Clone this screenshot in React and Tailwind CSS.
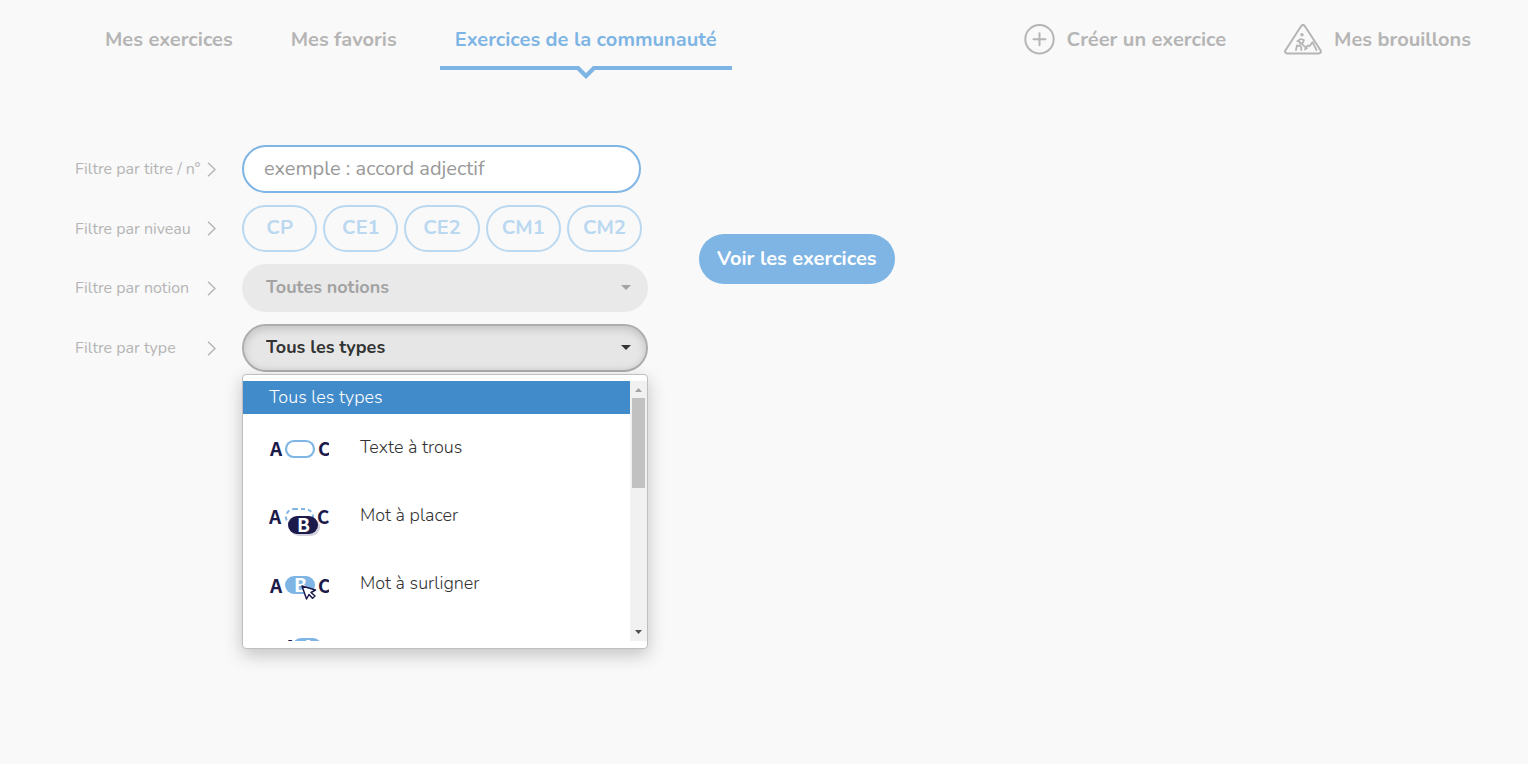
import { useState } from 'react';

const levels = ['CP', 'CE1', 'CE2', 'CM1', 'CM2'];
const types = ['Texte à trous', 'Mot à placer', 'Mot à surligner', 'Mot à corriger'];

const Letter = ({ x, y, children, fill = '#1c1a4b' }) => (
  <text x={x} y={y} fill={fill} className="font-['Noto_Sans_CJK_SC',sans-serif] text-[19px] font-bold">
    {children}
  </text>
);

const TypeIcon = ({ type }) => (
  <svg width="60" height="44" viewBox="0 -1 60 44" className="shrink-0" aria-hidden="true">
    {type === 0 && (
      <>
        <Letter x="1" y="29">A</Letter>
        <rect x="17" y="14" width="28" height="16" rx="8" fill="#fff" stroke="#7eb5e4" strokeWidth="2.2" />
        <Letter x="49" y="29">C</Letter>
      </>
    )}
    {type === 1 && (
      <>
        <Letter x="0" y="29">A</Letter>
        <rect x="17" y="14" width="27" height="16" rx="8" fill="none" stroke="#7eb5e4" strokeWidth="2" strokeDasharray="4 3" />
        <rect x="21" y="23" width="30" height="18" rx="9" fill="#d2d1dd" />
        <Letter x="48" y="29">C</Letter>
        <rect x="19" y="21" width="30" height="18" rx="9" fill="#1c1a4b" />
        <Letter x="28" y="37" fill="#fff">B</Letter>
      </>
    )}
    {type === 2 && (
      <>
        <Letter x="1" y="30">A</Letter>
        <rect x="16" y="13" width="30" height="18" rx="9" fill="#7eb5e4" />
        <Letter x="25" y="29" fill="#fff">B</Letter>
        <Letter x="49" y="30">C</Letter>
        <path d="M33 23 L46.5 27 L42 29.5 L46 33 L43.5 35.3 L40 31.5 L37.5 36 Z" fill="#fff" stroke="#1c1a4b" strokeWidth="1.5" strokeLinejoin="round" />
      </>
    )}
    {type === 3 && (
      <>
        <Letter x="15" y="23">A</Letter>
        <rect x="23" y="7" width="30" height="18" rx="9" fill="#7eb5e4" />
        <Letter x="33" y="23" fill="#fff">A</Letter>
      </>
    )}
  </svg>
);

const PlusIcon = () => (
  <svg width="31" height="31" viewBox="0 0 31 31" fill="none" stroke="#b5b5b5" strokeWidth="2" strokeLinecap="round" aria-hidden="true">
    <circle cx="15.5" cy="15.2" r="14.2" />
    <path d="M15.5 9.2v12M9.5 15.2h12" />
  </svg>
);

const DraftIcon = () => (
  <svg width="38" height="31" viewBox="0 0 38 31" fill="none" stroke="#b5b5b5" strokeWidth="2" strokeLinecap="round" strokeLinejoin="round" aria-hidden="true">
    <path d="M17.2 2 1.5 26.2c-1 1.7 0 3.2 1.8 3.2h31.4c1.8 0 2.8-1.5 1.8-3.2L20.8 2c-.9-1.4-2.7-1.4-3.6 0Z" />
    <circle cx="18" cy="10.8" r="1.7" fill="#b5b5b5" stroke="none" />
    <path d="M12 26l1-4.5 3 .3 1.3 1.7V26M13.4 17.2l3.3-2.2 3.2 1-1 2.8-3 .8M14.8 17.4l8 7M21 25.5l2.6-4 1.8.8 3.2-4.2 1.9 4 2 3.9" strokeWidth="1.8" />
  </svg>
);

const Chevron = () => (
  <svg width="9" height="15" viewBox="0 0 9 15" fill="none" stroke="#b5b5b5" strokeWidth="1.4" aria-hidden="true">
    <path d="M1 .8 8 7.5 1 14.2" />
  </svg>
);

const Caret = () => (
  <svg width="10" height="5" viewBox="0 0 10 5" fill="currentColor" className="pointer-events-none absolute top-[21px] right-[17px]" aria-hidden="true">
    <path d="M0 0h10L5 5Z" />
  </svg>
);

const FilterRow = ({ label, htmlFor, children }) => (
  <div className="flex items-center">
    <label htmlFor={htmlFor} className="flex w-[141px] shrink-0 items-center justify-between text-base text-[#b5b5b5]">
      {label}
      <Chevron />
    </label>
    <div className="ml-[26px] w-[406px]">{children}</div>
  </div>
);

const Tab = ({ active, children }) => (
  <a href="#" className={`relative flex h-[79px] items-center px-[29px] ${active ? 'text-[#7eb5e4]' : ''}`}>
    {children}
    {active && (
      <span className="absolute inset-x-[14px] bottom-0 flex h-[13px] items-start">
        <span className="h-1 flex-1 bg-[#7eb5e4]" />
        <svg width="18" height="13" viewBox="0 0 18 13" fill="#7eb5e4" aria-hidden="true">
          <path d="M0 0h2l7 7 7-7h2v4L9 13 0 4Z" />
        </svg>
        <span className="h-1 flex-1 bg-[#7eb5e4]" />
      </span>
    )}
  </a>
);

const App = () => {
  const [title, setTitle] = useState('');
  const [notion, setNotion] = useState('Toutes notions');
  const [type, setType] = useState('Tous les types');

  return (
    <div className="min-h-screen bg-[#f9f9f9] font-['Nunito','Lato',sans-serif]">
      <header className="flex justify-between pr-[57px] pl-[76px] text-xl font-bold text-[#b5b5b5]">
        <nav className="flex">
          <Tab>Mes exercices</Tab>
          <Tab>Mes favoris</Tab>
          <Tab active>Exercices de la communauté</Tab>
        </nav>
        <div className="flex h-[79px] items-center gap-[58px]">
          <a href="#" className="flex items-center gap-3">
            <PlusIcon />
            Créer un exercice
          </a>
          <a href="#" className="flex items-center gap-3">
            <DraftIcon />
            Mes brouillons
          </a>
        </div>
      </header>

      <main className="mt-[66px] flex items-center gap-[51px] pl-[75px]">
        <form className="flex flex-col gap-3" onSubmit={(e) => e.preventDefault()}>
          <FilterRow label="Filtre par titre / n°" htmlFor="title">
            <input
              id="title"
              type="text"
              value={title}
              onChange={(e) => setTitle(e.target.value)}
              placeholder="exemple : accord adjectif"
              className="block h-12 w-[399px] rounded-full border-2 border-[#7eb5e4] bg-white px-5 pb-[2px] text-xl text-[#333] outline-none placeholder:text-[#999]"
            />
          </FilterRow>
          <FilterRow label="Filtre par niveau" htmlFor="level-CP">
            <div className="flex w-[400px] gap-[6px]">
              {levels.map((level) => (
                <button
                  key={level}
                  id={`level-${level}`}
                  type="button"
                  className="h-[47px] flex-1 rounded-full border-2 border-[#bad8f0] pb-[2px] text-xl font-bold text-[#bad8f0]"
                >
                  {level}
                </button>
              ))}
            </div>
          </FilterRow>
          <FilterRow label="Filtre par notion" htmlFor="notion">
            <div className="relative text-[#a3a3a3]">
              <select
                id="notion"
                value={notion}
                onChange={(e) => setNotion(e.target.value)}
                className="block h-12 w-full appearance-none rounded-full bg-[#e9e9e9] px-6 pb-[2px] text-lg font-bold outline-none"
              >
                <option>Toutes notions</option>
              </select>
              <Caret />
            </div>
          </FilterRow>
          <FilterRow label="Filtre par type" htmlFor="type">
            <div className="relative text-[#333]">
              <select
                id="type"
                value={type}
                onChange={(e) => setType(e.target.value)}
                className="block h-12 w-full appearance-none rounded-full border-2 border-[#adadad] bg-[#e6e6e6] px-[22px] pb-[2px] text-lg font-bold shadow-[inset_0_3px_8px_rgba(0,0,0,0.16)] outline-none"
              >
                <option>Tous les types</option>
                {types.map((name) => (
                  <option key={name}>{name}</option>
                ))}
              </select>
              <Caret />

              <div className="absolute top-full left-0 z-10 mt-[2px] flex w-full rounded border border-[#bfbfbf] bg-white pt-[6px] pb-[7px] shadow-[0_6px_18px_rgba(0,0,0,0.22)]">
                <ul className="h-[260px] flex-1 overflow-y-auto text-lg font-light [scrollbar-width:none]">
                  <li>
                    <button type="button" onClick={() => setType('Tous les types')} className="flex h-[33px] w-full items-center bg-[#428bca] pb-[2px] pl-[26px] text-white">
                      Tous les types
                    </button>
                  </li>
                  {types.map((name, i) => (
                    <li key={name}>
                      <button type="button" onClick={() => setType(name)} className="flex h-[68px] w-full items-center gap-[31px] pl-[26px]">
                        <TypeIcon type={i} />
                        <span className="pb-[2px]">{name}</span>
                      </button>
                    </li>
                  ))}
                </ul>
                <div className="flex w-[17px] flex-col items-center bg-[#f1f1f1]" aria-hidden="true">
                  <svg width="17" height="17" viewBox="0 0 17 17" fill="#a3a3a3">
                    <path d="M5 11h7L8.5 7Z" />
                  </svg>
                  <span className="h-[90px] w-[13px] bg-[#c1c1c1]" />
                  <svg width="17" height="17" viewBox="0 0 17 17" fill="#505050" className="mt-auto">
                    <path d="M5 6h7L8.5 10Z" />
                  </svg>
                </div>
              </div>
            </div>
          </FilterRow>
        </form>

        <button type="button" className="h-[50px] rounded-full bg-[#7eb5e4] px-[18px] text-xl font-bold text-white">
          Voir les exercices
        </button>
      </main>
    </div>
  );
};

export default App;
